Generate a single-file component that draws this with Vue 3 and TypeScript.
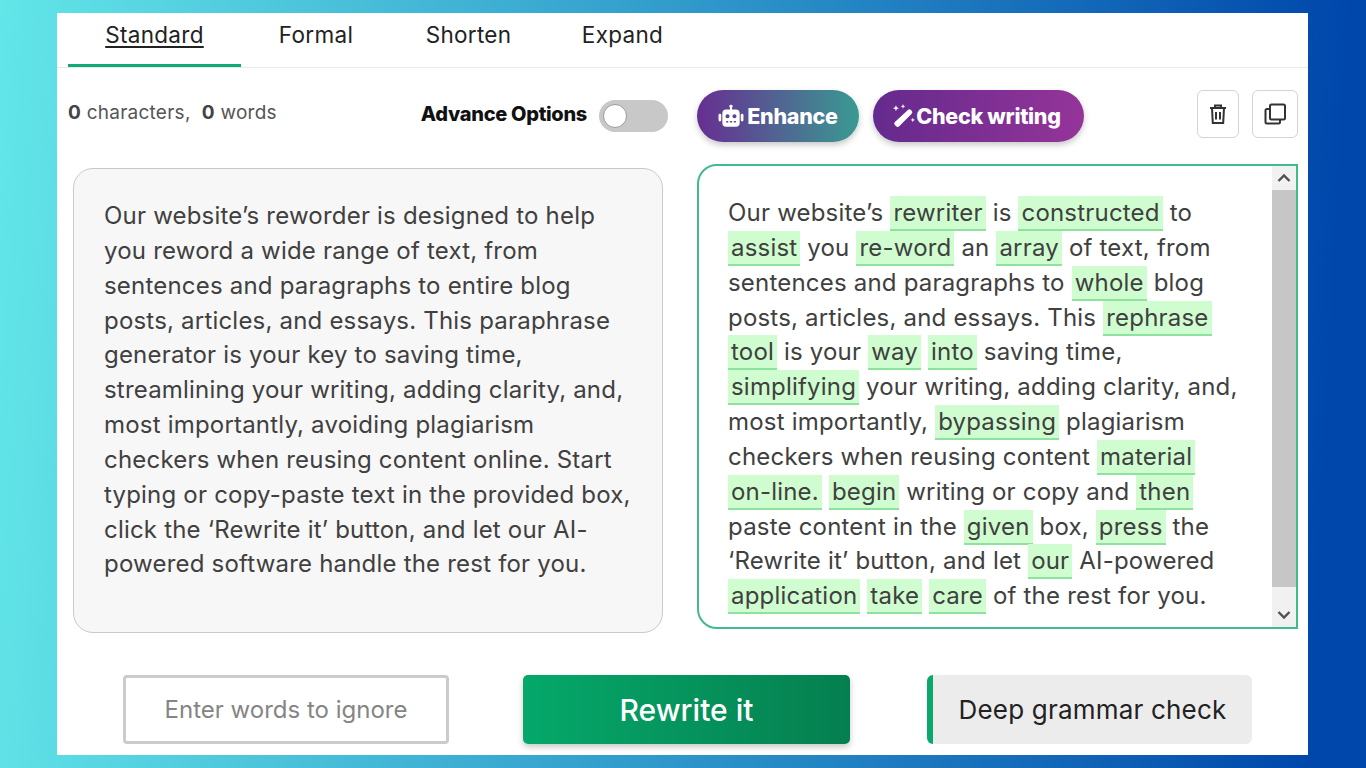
<script setup lang="ts">
const tabs = ['Standard', 'Formal', 'Shorten', 'Expand']

const sourceLines = [
  'Our website’s reworder is designed to help',
  'you reword a wide range of text, from',
  'sentences and paragraphs to entire blog',
  'posts, articles, and essays. This paraphrase',
  'generator is your key to saving time,',
  'streamlining your writing, adding clarity, and,',
  'most importantly, avoiding plagiarism',
  'checkers when reusing content online. Start',
  'typing or copy-paste text in the provided box,',
  'click the ‘Rewrite it’ button, and let our AI-',
  'powered software handle the rest for you.',
]

const resultMarkup = [
  'Our website’s [rewriter] is [constructed] to',
  '[assist] you [re-word] an [array] of text, from',
  'sentences and paragraphs to [whole] blog',
  'posts, articles, and essays. This [rephrase]',
  '[tool] is your [way] [into] saving time,',
  '[simplifying] your writing, adding clarity, and,',
  'most importantly, [bypassing] plagiarism',
  'checkers when reusing content [material]',
  '[on-line.] [begin] writing or copy and [then]',
  'paste content in the [given] box, [press] the',
  '‘Rewrite it’ button, and let [our] AI-powered',
  '[application] [take] [care] of the rest for you.',
]

interface Segment {
  text: string
  changed: boolean
}

const resultLines: Segment[][] = resultMarkup.map((line) =>
  line
    .split(/(\[[^\]]+\])/)
    .filter((part) => part.length > 0)
    .map((part) =>
      part.startsWith('[')
        ? { text: part.slice(1, -1), changed: true }
        : { text: part, changed: false },
    ),
)
</script>

<template>
  <div class="page">
    <main class="card">
      <nav class="tabs">
        <a v-for="(tab, i) in tabs" :key="tab" class="tab" :class="{ active: i === 0 }">{{ tab }}</a>
      </nav>

      <section class="toolbar">
        <div class="tool-left">
          <p class="counts"><b>0</b> characters,&nbsp; <b>0</b> words</p>
          <div class="advance">
            <span class="advance-label">Advance Options</span>
            <span class="toggle"><span class="knob"></span></span>
          </div>
        </div>
        <div class="tool-right">
          <button class="pill enhance">
            <svg class="pill-icon" viewBox="0 0 24 24" width="26" height="26" aria-hidden="true">
              <path fill="#fff" fill-rule="evenodd" d="M12 1.500a1.600 1.600 0 0 1 .9 2.900V6h3.600A3.500 3.500 0 0 1 20 9.500v9a3.500 3.500 0 0 1-3.500 3.500h-9A3.500 3.500 0 0 1 4 18.500v-9A3.500 3.500 0 0 1 7.500 6h3.600V4.400A1.600 1.600 0 0 1 12 1.500ZM8.800 10.300a1.900 1.900 0 1 0 0 3.800 1.900 1.900 0 0 0 0-3.800Zm6.400 0a1.900 1.900 0 1 0 0 3.800 1.900 1.900 0 0 0 0-3.800ZM7.500 16.500v1.500h2v-1.500Zm3.500 0v1.500h2v-1.500Zm3.500 0v1.500h2v-1.500Z" />
              <rect fill="#fff" x="0.500" y="10" width="2.500" height="7" rx="1.200" />
              <rect fill="#fff" x="21" y="10" width="2.500" height="7" rx="1.200" />
            </svg>
            Enhance
          </button>
          <button class="pill check">
            <svg class="pill-icon" viewBox="0 0 24 24" width="26" height="26" aria-hidden="true">
              <path fill="#fff" d="M16.500 6.500a2 2 0 0 1 2.800 0l.7.7a2 2 0 0 1 0 2.800L8.500 21.500a2 2 0 0 1-2.800 0l-1.200-1.200a2 2 0 0 1 0-2.800Z" />
              <path fill="#fff" d="M5.500 2l.8 2 2 .8-2 .8-.8 2-.8-2-2-.8 2-.8ZM12 1l.6 1.500 1.500.6-1.500.6L12 5.200l-.6-1.500-1.500-.6 1.500-.6ZM21 13.500l.6 1.500 1.500.6-1.500.6-.6 1.500-.6-1.500-1.500-.6 1.500-.6Z" />
            </svg>
            Check writing
          </button>
          <span class="spacer"></span>
          <button class="square trash" aria-label="Clear">
            <svg viewBox="0 0 24 24" width="24" height="24" fill="none" stroke="#333" stroke-width="2" aria-hidden="true">
              <path d="M4 6h16M9 6V3.500h6V6M6 6l.8 15h10.400L18 6M10 10v7.500M14 10v7.500" />
            </svg>
          </button>
          <button class="square copy" aria-label="Copy">
            <svg viewBox="0 0 24 24" width="24" height="24" fill="none" stroke="#333" stroke-width="2" aria-hidden="true">
              <rect x="7" y="2.500" width="15" height="15" rx="1.500" />
              <path d="M7 7H4a1.500 1.500 0 0 0-1.500 1.500V20A1.500 1.500 0 0 0 4 21.500h11.500A1.500 1.500 0 0 0 17 20v-2.500" />
            </svg>
          </button>
        </div>
      </section>

      <section class="editors">
        <div class="source">
          <div v-for="line in sourceLines" :key="line" class="line">{{ line }}</div>
        </div>
        <div class="result">
          <div class="result-text">
            <div v-for="(line, i) in resultLines" :key="i" class="line">
              <template v-for="(seg, j) in line" :key="j">
                <span v-if="seg.changed" class="changed">{{ seg.text }}</span>
                <template v-else>{{ seg.text }}</template>
              </template>
            </div>
          </div>
          <div class="scrollbar" aria-hidden="true">
            <span class="arrow">
              <svg viewBox="0 0 14 10" width="14" height="10"><path d="M1.500 8L7 2.500 12.500 8" fill="none" stroke="#505050" stroke-width="2.400" /></svg>
            </span>
            <span class="thumb"></span>
            <span class="arrow">
              <svg viewBox="0 0 14 10" width="14" height="10"><path d="M1.500 2L7 7.500 12.500 2" fill="none" stroke="#505050" stroke-width="2.400" /></svg>
            </span>
          </div>
        </div>
      </section>

      <section class="actions">
        <input class="ignore" type="text" placeholder="Enter words to ignore" />
        <button class="rewrite">Rewrite it</button>
        <button class="deep">Deep grammar check</button>
      </section>
    </main>
  </div>
</template>

<style scoped>
.page {
  min-height: 768px;
  box-sizing: border-box;
  padding: 13px 58px 13px 57px;
  background: linear-gradient(93deg, #62e6e8 0%, #2f98cb 50%, #0047ab 96%);
  font-family: Inter, "Noto Sans", sans-serif;
  color: #333;
}
.card {
  height: 742px;
  background: #fff;
  display: flex;
  flex-direction: column;
}
.tabs {
  display: flex;
  height: 54px;
  padding-left: 11px;
  border-bottom: 1px solid #e9e9e9;
}
.tab {
  box-sizing: border-box;
  height: 54px;
  padding: 9px 0 0;
  font-size: 22.5px;
  letter-spacing: 0.3px;
  line-height: 26px;
  color: #222;
  text-align: center;
}
.tab:nth-child(1) { width: 173px; }
.tab:nth-child(2) { width: 150px; }
.tab:nth-child(3) { width: 155px; }
.tab:nth-child(4) { width: 153px; }
.tab.active {
  text-decoration: underline;
  text-underline-offset: 3px;
  border-bottom: 3px solid #10ab72;
}
.toolbar {
  display: flex;
  gap: 29px;
  height: 96px;
  padding: 0 10px 0 11px;
}
.tool-left {
  width: 600px;
  display: flex;
  justify-content: space-between;
  align-items: flex-start;
  padding-top: 32px;
  box-sizing: border-box;
}
.counts {
  margin: 0;
  font-size: 19px;
  line-height: 26px;
  color: #555;
  letter-spacing: 0.25px;
}
.counts b {
  color: #444;
}
.advance {
  display: flex;
  align-items: flex-start;
  gap: 12px;
}
.advance-label {
  font-size: 20px;
  line-height: 28px;
  font-weight: 800;
  color: #111;
  letter-spacing: -0.3px;
}
.toggle {
  display: flex;
  align-items: center;
  width: 69px;
  height: 32px;
  box-sizing: border-box;
  padding-left: 4px;
  border-radius: 16px;
  background: #c8c8c8;
}
.knob {
  width: 24px;
  height: 24px;
  box-sizing: border-box;
  border-radius: 50%;
  background: #fff;
  border: 1px solid #999;
}
.tool-right {
  flex: 1;
  display: flex;
  align-items: flex-start;
  padding-top: 22px;
}
.pill {
  display: flex;
  align-items: center;
  justify-content: center;
  gap: 3px;
  height: 52px;
  border: 0;
  padding: 0;
  border-radius: 26px;
  color: #fff;
  font-family: inherit;
  font-size: 21.5px;
  font-weight: 800;
  letter-spacing: -0.3px;
  box-shadow: 0 3px 6px rgba(0, 0, 0, 0.22);
}
.enhance {
  width: 162px;
  background: linear-gradient(90deg, #672e92, #3a9a92);
}
.check {
  width: 211px;
  margin-left: 14px;
  padding-right: 6px;
  gap: 0;
  background: linear-gradient(90deg, #642a8d, #953499);
}
.pill-icon {
  flex: none;
}
.spacer {
  flex: 1;
}
.square {
  display: flex;
  align-items: center;
  justify-content: center;
  height: 48px;
  padding: 0;
  background: #fff;
  border: 1px solid #d4d4d4;
  border-radius: 6px;
}
.trash {
  width: 42px;
}
.copy {
  width: 46px;
  margin-left: 13px;
}
.editors {
  display: flex;
  gap: 29px;
  height: 469px;
  padding: 0 10px 0 11px;
  align-items: flex-start;
}
.line {
  height: 34.85px;
  line-height: 34.85px;
  white-space: pre;
  font-size: 24px;
  letter-spacing: 0.2px;
  color: #404040;
}
.source {
  width: 590px;
  height: 465px;
  box-sizing: border-box;
  margin: 4px 5px 0;
  padding: 30px 0 0 30px;
  background: #f7f7f7;
  border: 1px solid #c9c9c9;
  border-radius: 20px;
}
.result {
  flex: 1;
  height: 465px;
  box-sizing: border-box;
  display: flex;
  border: 2px solid #3fbb8c;
  border-radius: 20px 0 0 20px;
  overflow: hidden;
}
.result-text {
  flex: 1;
  padding: 30px 0 0 29px;
}
.changed {
  display: inline-block;
  height: 35px;
  box-sizing: border-box;
  padding: 0 3px;
  line-height: 33px;
  vertical-align: top;
  background: #d0fdd0;
  border-bottom: 2px solid #8ee2a0;
}
.scrollbar {
  width: 24px;
  display: flex;
  flex-direction: column;
  background: #f1f1f1;
}
.arrow {
  height: 24px;
  display: flex;
  align-items: center;
  justify-content: center;
  flex: none;
}
.thumb {
  flex: 1;
  background: #c6c6c6;
  margin-bottom: 16px;
}
.actions {
  display: flex;
  margin-top: 42px;
  padding-left: 66px;
  height: 69px;
}
.ignore {
  width: 326px;
  height: 69px;
  box-sizing: border-box;
  padding: 0;
  border: 3px solid #cbcbcb;
  border-radius: 4px;
  outline: none;
  font-family: inherit;
  font-size: 24px;
  text-align: center;
  background: #fff;
}
.ignore::placeholder {
  color: #858585;
  opacity: 1;
}
.rewrite {
  width: 327px;
  height: 69px;
  margin-left: 74px;
  border: 0;
  border-radius: 5px;
  background: linear-gradient(90deg, #05a86a, #057f4f);
  color: #fff;
  font-family: inherit;
  font-size: 30px;
  font-weight: 500;
  box-shadow: 0 3px 6px rgba(0, 0, 0, 0.22);
}
.deep {
  width: 325px;
  height: 69px;
  margin-left: 77px;
  border: 0;
  border-left: 6px solid #0aa86d;
  border-radius: 6px;
  background: #ececec;
  color: #222;
  font-family: inherit;
  font-size: 26px;
  letter-spacing: 0.2px;
}
</style>
